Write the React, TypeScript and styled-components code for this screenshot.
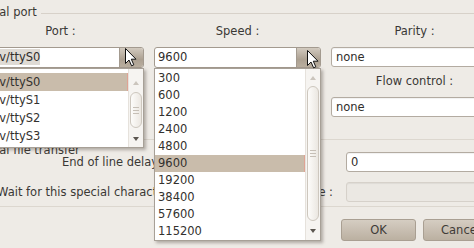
import React from 'react';
import styled, { createGlobalStyle } from 'styled-components';

const GlobalStyle = createGlobalStyle`
  html, body {
    margin: 0;
    padding: 0;
    background: #eeebe6;
  }

  body {
    overflow: hidden;
    font-family: 'DejaVu Sans', 'Liberation Sans', sans-serif;
    font-size: 11.5px;
    color: #3a3835;
  }
`;

const Screen = styled.div`
  width: 474px;
  height: 248px;
  overflow: hidden;
  background: #eeebe6;
`;

// the dialog is cropped on the left and right edges
const Dialog = styled.div`
  display: flex;
  flex-direction: column;
  width: 521px;
  margin-left: -23px;
`;

const FrameHead = styled.div`
  display: flex;
  align-items: center;
  gap: 4px;
  height: 23px;
`;

const FrameTitle = styled.span`
  white-space: nowrap;
  line-height: 16px;
`;

const FrameLine = styled.div`
  flex: 1;
  height: 1px;
  margin-top: 3px;
  background: #d7d1c9;
`;

const Columns = styled.div`
  display: grid;
  grid-template-columns: repeat(3, 167px);
  column-gap: 10px;
  align-items: start;
`;

const Column = styled.div`
  display: flex;
  flex-direction: column;
  gap: 6px;
`;

const Field = styled.div`
  display: flex;
  flex-direction: column;
  gap: 8px;
`;

const FieldLabel = styled.div`
  height: 16px;
  line-height: 17px;
  text-align: center;
  white-space: nowrap;
`;

const Combo = styled.div`
  position: relative;
  display: flex;
  height: 21px;
  box-sizing: border-box;
  border: 1px solid #a39a8f;
  border-radius: 3px;
  background: #fff;
`;

const ComboText = styled.div`
  flex: 1;
  padding: 0 3px;
  line-height: 19px;
  color: #2f2d2b;
  white-space: nowrap;
  overflow: hidden;
`;

const Selection = styled.span`
  padding: 1px 0;
  background: #dfdbd5;
`;

const ComboButton = styled.div`
  position: relative;
  width: 23px;
  border-left: 1px solid #a39a8f;
  border-radius: 0 2px 2px 0;
  background: linear-gradient(#d2cabf, #aca091 60%, #b9ae9f);
`;

const Cursor = styled.svg<{ $x: number; $y: number }>`
  position: absolute;
  left: ${p => p.$x}px;
  top: ${p => p.$y}px;
  width: 12px;
  height: 19px;
  z-index: 10;
`;

const Popup = styled.div<{ $height: number }>`
  position: absolute;
  top: calc(100% + 1px);
  left: -1px;
  right: -1px;
  z-index: 5;
  display: flex;
  box-sizing: border-box;
  height: ${p => p.$height}px;
  border: 1px solid #a7a097;
  background: #fff;
  box-shadow: 2px 2px 3px rgba(60, 50, 40, 0.35);
`;

const Options = styled.div<{ $padTop: number }>`
  flex: 1;
  padding-top: ${p => p.$padTop}px;
`;

const Option = styled.div<{ $rowHeight: number; $active?: boolean }>`
  height: ${p => p.$rowHeight}px;
  line-height: ${p => p.$rowHeight}px;
  padding-left: 3px;
  color: #33312e;
  white-space: nowrap;
  background: ${p => (p.$active ? '#c9bcab' : 'transparent')};
  box-shadow: ${p => (p.$active ? 'inset -1px 0 0 #dfa394' : 'none')};
`;

const Scrollbar = styled.div`
  display: flex;
  flex-direction: column;
  align-items: center;
  width: 14px;
  border-left: 1px solid #e6e2dc;
  background: #f6f4f1;
`;

const Arrow = styled.div<{ $dir: 'up' | 'down'; $offset: number }>`
  width: 0;
  height: 0;
  border-left: 3px solid transparent;
  border-right: 3px solid transparent;
  ${p =>
    p.$dir === 'up'
      ? `border-bottom: 4px solid #cbc5bd; margin-top: ${p.$offset}px;`
      : `border-top: 4px solid #5b5650; margin-top: auto; margin-bottom: ${p.$offset}px;`}
`;

const Thumb = styled.div<{ $top: number; $height: number }>`
  display: flex;
  flex-direction: column;
  align-items: center;
  justify-content: center;
  gap: 2px;
  box-sizing: border-box;
  width: 12px;
  height: ${p => p.$height}px;
  margin-top: ${p => p.$top}px;
  border: 1px solid #cdc7be;
  border-radius: 6px;
  background: linear-gradient(90deg, #fdfcfa, #ebe7e1);
`;

const Grip = styled.div`
  width: 6px;
  height: 1px;
  background: #c6bfb6;
`;

const Entry = styled.div<{ $disabled?: boolean }>`
  box-sizing: border-box;
  height: 20px;
  padding: 0 4px;
  line-height: 18px;
  border: 1px solid ${p => (p.$disabled ? '#d6d1ca' : '#b3aba1')};
  border-radius: 3px;
  background: ${p => (p.$disabled ? '#ebe8e3' : '#fff')};
  box-shadow: inset 0 1px 1px rgba(0, 0, 0, 0.06);
  color: #2f2d2b;
  white-space: nowrap;
`;

const Divider = styled.div<{ $gap: number }>`
  height: 1px;
  margin-top: ${p => p.$gap}px;
  background: #dcd7cf;
`;

const TransferTitle = styled.div`
  height: 10px;
  margin-top: 2px;
  line-height: 16px;
  white-space: nowrap;
`;

const TransferRows = styled.div`
  display: flex;
  flex-direction: column;
  gap: 10px;
`;

const TransferRow = styled.div`
  display: grid;
  grid-template-columns: 1fr 152px;
  column-gap: 13px;
  align-items: center;
`;

const RowLabel = styled.div<{ $indent: number }>`
  display: flex;
  justify-content: space-between;
  padding-left: ${p => p.$indent}px;
  white-space: nowrap;
`;

const ButtonBar = styled.div`
  display: flex;
  justify-content: flex-end;
  gap: 7px;
  margin-top: 12px;
`;

const Button = styled.button`
  width: 75px;
  height: 22px;
  padding: 0;
  border: 1px solid #a99f92;
  border-radius: 3px;
  background: linear-gradient(#d5cdc2, #bbb0a1);
  color: #3f3b37;
  font-family: inherit;
  font-size: 11.5px;
`;

const PointerIcon = ({ x, y }: { x: number; y: number }) => (
  <Cursor $x={x} $y={y} viewBox="0 0 12 19">
    <path
      d="M0.5 0.5 L0.5 15.5 L4 12 L6.6 17.8 L8.8 16.8 L6.3 11.2 L11 11.2 Z"
      fill="#fff"
      stroke="#111"
      strokeWidth="1"
      strokeLinejoin="round"
    />
  </Cursor>
);

const ports = ['/dev/ttyS0', '/dev/ttyS1', '/dev/ttyS2', '/dev/ttyS3'];
const speeds = ['300', '600', '1200', '2400', '4800', '9600', '19200', '38400', '57600', '115200'];

const App = () => {
  return (
    <Screen>
      <GlobalStyle />
      <Dialog>
        <FrameHead>
          <FrameTitle>Serial port</FrameTitle>
          <FrameLine />
        </FrameHead>

        <Columns>
          <Column>
            <Field>
              <FieldLabel>Port :</FieldLabel>
              <Combo>
                <ComboText>
                  <Selection>/dev/ttyS0</Selection>
                </ComboText>
                <ComboButton>
                  <PointerIcon x={5} y={0} />
                </ComboButton>
                <Popup $height={80}>
                  <Options $padTop={4}>
                    {ports.map(port => (
                      <Option key={port} $rowHeight={18} $active={port === '/dev/ttyS0'}>
                        {port}
                      </Option>
                    ))}
                  </Options>
                  <Scrollbar>
                    <Arrow $dir={'up'} $offset={12} />
                    <Thumb $top={7} $height={36}>
                      <Grip />
                      <Grip />
                      <Grip />
                    </Thumb>
                    <Arrow $dir={'down'} $offset={6} />
                  </Scrollbar>
                </Popup>
              </Combo>
            </Field>
          </Column>

          <Column>
            <Field>
              <FieldLabel>Speed :</FieldLabel>
              <Combo>
                <ComboText>9600</ComboText>
                <ComboButton>
                  <PointerIcon x={10} y={2} />
                </ComboButton>
                <Popup $height={173}>
                  <Options $padTop={1}>
                    {speeds.map(speed => (
                      <Option key={speed} $rowHeight={17} $active={speed === '9600'}>
                        {speed}
                      </Option>
                    ))}
                  </Options>
                  <Scrollbar>
                    <Arrow $dir={'up'} $offset={7} />
                    <Thumb $top={6} $height={135}>
                      <Grip />
                      <Grip />
                      <Grip />
                    </Thumb>
                    <Arrow $dir={'down'} $offset={7} />
                  </Scrollbar>
                </Popup>
              </Combo>
            </Field>
          </Column>

          <Column>
            <Field>
              <FieldLabel>Parity :</FieldLabel>
              <Entry>none</Entry>
            </Field>
            <Field>
              <FieldLabel>Flow control :</FieldLabel>
              <Entry>none</Entry>
            </Field>
          </Column>
        </Columns>

        <Divider $gap={22} />
        <TransferTitle>Serial file transfer</TransferTitle>
        <TransferRows>
          <TransferRow>
            <RowLabel $indent={85}>
              <span>End of line delay (ms) :</span>
            </RowLabel>
            <Entry>0</Entry>
          </TransferRow>
          <TransferRow>
            <RowLabel $indent={20}>
              <span>Wait for this special character</span>
              <span>end of line :</span>
            </RowLabel>
            <Entry $disabled />
          </TransferRow>
        </TransferRows>

        <Divider $gap={4} />
        <ButtonBar>
          <Button>OK</Button>
          <Button>Cancel</Button>
        </ButtonBar>
      </Dialog>
    </Screen>
  );
};

export default App;
